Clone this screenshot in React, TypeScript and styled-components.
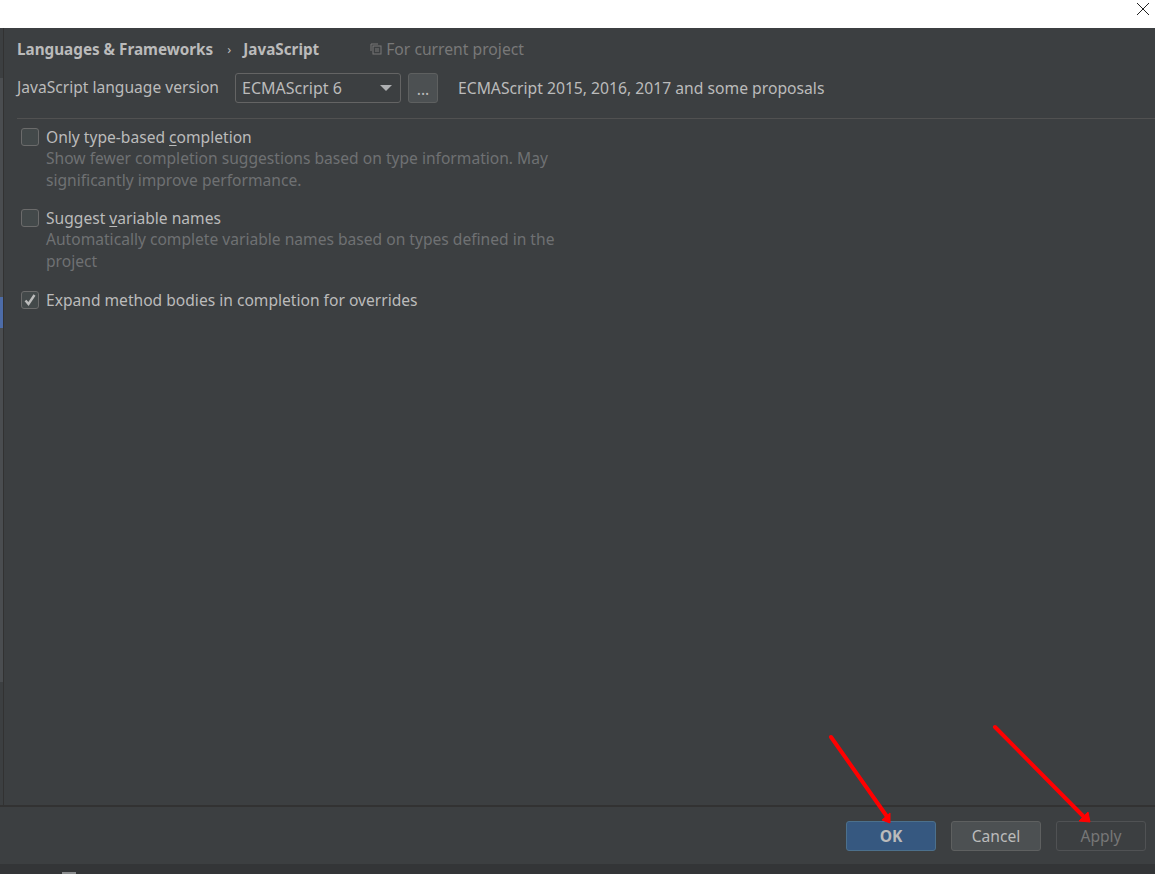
import styled, { createGlobalStyle } from 'styled-components';

const GlobalStyle = createGlobalStyle`
  html, body {
    margin: 0;
    padding: 0;
    background: #3c3f41;
  }
  #root {
    height: 874px;
  }
`;

const Page = styled.div`
  position: relative;
  display: flex;
  flex-direction: column;
  width: 1155px;
  height: 874px;
  overflow: hidden;
  font-family: 'Noto Sans', 'Open Sans', sans-serif;
  font-size: 15.6px;
  color: #bbbbbb;
`;

const TitleBar = styled.div`
  display: flex;
  justify-content: flex-end;
  align-items: flex-start;
  height: 28px;
  background: #ffffff;
  padding: 2px 5px 0 0;
  box-sizing: border-box;
`;

const Main = styled.div`
  display: flex;
  flex: 1;
  min-height: 0;
`;

const Strip = styled.div`
  display: flex;
  flex-direction: column;
  width: 3px;
  border-right: 1px solid #323232;
`;

const StripPart = styled.div<{ $h: number; $c: string }>`
  height: ${(p) => p.$h}px;
  background: ${(p) => p.$c};
`;

const Content = styled.div`
  flex: 1;
  padding: 0 0 0 13px;
`;

const Crumbs = styled.div`
  display: flex;
  align-items: center;
  height: 42px;
  font-size: 15.25px;
  font-weight: 700;
  color: #bbbbbb;
`;

const Chevron = styled.span`
  margin: 0 12px 0 14px;
  font-weight: 400;
  font-size: 13px;
`;

const ProjectNote = styled.span`
  display: flex;
  align-items: center;
  gap: 4px;
  margin-left: 51px;
  font-size: 15.7px;
  font-weight: 400;
  color: #787878;
`;

const VersionRow = styled.div`
  display: flex;
  align-items: center;
  height: 36px;
  padding-bottom: 12px;
  border-bottom: 1px solid #515151;
`;

const VersionLabel = styled.span`
  width: 218px;
  padding-bottom: 2px;
`;

const Select = styled.div`
  display: flex;
  align-items: center;
  justify-content: space-between;
  width: 166px;
  height: 30px;
  box-sizing: border-box;
  padding: 0 7px 0 6px;
  border: 1px solid #646464;
  border-radius: 3px;
  background: #3c3f41;
  font-size: 16px;
`;

const Arrow = styled.span`
  width: 0;
  height: 0;
  margin-right: 1px;
  border-left: 6px solid transparent;
  border-right: 6px solid transparent;
  border-top: 6px solid #aeb0b2;
`;

const DotsButton = styled.div`
  display: flex;
  align-items: flex-end;
  justify-content: center;
  width: 30px;
  height: 30px;
  margin-left: 7px;
  box-sizing: border-box;
  padding-bottom: 3px;
  border: 1px solid #5e6060;
  border-radius: 3px;
  background: #4c5052;
  line-height: 20px;
`;

const VersionHint = styled.span`
  margin-left: 20px;
  font-size: 15.7px;
`;

const Options = styled.div`
  display: flex;
  flex-direction: column;
  padding: 8px 0 0 4px;
`;

const Option = styled.div<{ $gap: number }>`
  display: grid;
  grid-template-columns: 18px 1fr;
  column-gap: 7px;
  margin-bottom: ${(p) => p.$gap}px;
`;

const Box = styled.span`
  display: flex;
  align-items: center;
  justify-content: center;
  width: 18px;
  height: 18px;
  margin-top: 1px;
  box-sizing: border-box;
  border: 1px solid #6b6b6b;
  border-radius: 3px;
  background: #43494a;
`;

const OptionLabel = styled.div`
  line-height: 20px;
  color: #bbbbbb;
`;

const Mnemonic = styled.span`
  text-decoration: underline;
  text-underline-offset: 2px;
`;

const OptionHint = styled.div`
  grid-column: 2;
  width: 530px;
  line-height: 22px;
  color: #6f7173;
`;

const Footer = styled.div`
  display: flex;
  justify-content: flex-end;
  gap: 15px;
  height: 59px;
  box-sizing: border-box;
  padding: 14px 9px 0 0;
  border-top: 2px solid #323232;
`;

const Button = styled.div<{ $kind: 'primary' | 'normal' | 'disabled' }>`
  display: flex;
  align-items: center;
  justify-content: center;
  width: 90px;
  height: 30px;
  box-sizing: border-box;
  border-radius: 3px;
  border: 1px solid
    ${(p) => (p.$kind === 'primary' ? '#4c708c' : p.$kind === 'normal' ? '#5e6060' : '#505254')};
  background: ${(p) =>
    p.$kind === 'primary' ? '#365880' : p.$kind === 'normal' ? '#4c5052' : 'transparent'};
  color: ${(p) => (p.$kind === 'disabled' ? '#777777' : '#bbbbbb')};
  font-weight: ${(p) => (p.$kind === 'primary' ? 700 : 400)};
`;

const BottomEdge = styled.div`
  height: 10px;
  background: #333537;
`;

const PeekingIcon = styled.span`
  position: absolute;
  left: 62px;
  bottom: 0;
  width: 14px;
  height: 2px;
  background: #8a8c8e;
`;

const Annotations = styled.svg`
  position: absolute;
  left: 0;
  top: 0;
  pointer-events: none;
`;

const check = (
  <svg width="14" height="14" viewBox="0 0 14 14">
    <path d="M2.5 7.5 L5.5 11 L11.5 2" fill="none" stroke="#bcbcbc" strokeWidth="2.4" />
  </svg>
);

export default function App() {
  return (
    <>
      <GlobalStyle />
      <Page>
        <TitleBar>
          <svg width="14" height="14" viewBox="0 0 14 14">
            <path d="M1 1 L13 13 M13 1 L1 13" stroke="#222" strokeWidth="1" />
          </svg>
        </TitleBar>
        <Main>
          <Strip>
            <StripPart $h={50} $c="#3c3f41" />
            <StripPart $h={219} $c="#4a4d50" />
            <StripPart $h={31} $c="#4d6ca8" />
            <StripPart $h={354} $c="#4a4d50" />
          </Strip>
          <Content>
            <Crumbs>
              Languages &amp; Frameworks
              <Chevron>›</Chevron>
              JavaScript
              <ProjectNote>
                <svg width="12" height="12" viewBox="0 0 12 12" fill="none" stroke="#787878">
                  <path d="M1 8 V1 H8" />
                  <rect x="3" y="3" width="8" height="8" />
                  <path d="M5 6 H9 M5 8 H9" />
                </svg>
                For current project
              </ProjectNote>
            </Crumbs>
            <VersionRow>
              <VersionLabel>JavaScript language version</VersionLabel>
              <Select>
                ECMAScript 6
                <Arrow />
              </Select>
              <DotsButton>...</DotsButton>
              <VersionHint>ECMAScript 2015, 2016, 2017 and some proposals</VersionHint>
            </VersionRow>
            <Options>
              <Option $gap={17}>
                <Box />
                <OptionLabel>
                  Only type-based <Mnemonic>c</Mnemonic>ompletion
                </OptionLabel>
                <OptionHint>
                  Show fewer completion suggestions based on type information. May significantly
                  improve performance.
                </OptionHint>
              </Option>
              <Option $gap={18}>
                <Box />
                <OptionLabel>
                  Suggest <Mnemonic>v</Mnemonic>ariable names
                </OptionLabel>
                <OptionHint>
                  Automatically complete variable names based on types defined in the project
                </OptionHint>
              </Option>
              <Option $gap={0}>
                <Box>{check}</Box>
                <OptionLabel>Expand method bodies in completion for overrides</OptionLabel>
              </Option>
            </Options>
          </Content>
        </Main>
        <Footer>
          <Button $kind="primary">OK</Button>
          <Button $kind="normal">Cancel</Button>
          <Button $kind="disabled">Apply</Button>
        </Footer>
        <BottomEdge />
        <PeekingIcon />
        <Annotations width="1155" height="874" viewBox="0 0 1155 874">
          <path d="M831 737 L888 818" stroke="#ff0000" strokeWidth="4" strokeLinecap="round" />
          <path d="M882 820 L890 823 L890 813 Z" fill="#ff0000" stroke="#ff0000" />
          <path d="M995 727 L1086 819" stroke="#ff0000" strokeWidth="4" strokeLinecap="round" />
          <path d="M1079 821 L1090 822 L1088 812 Z" fill="#ff0000" stroke="#ff0000" />
        </Annotations>
      </Page>
    </>
  );
}
